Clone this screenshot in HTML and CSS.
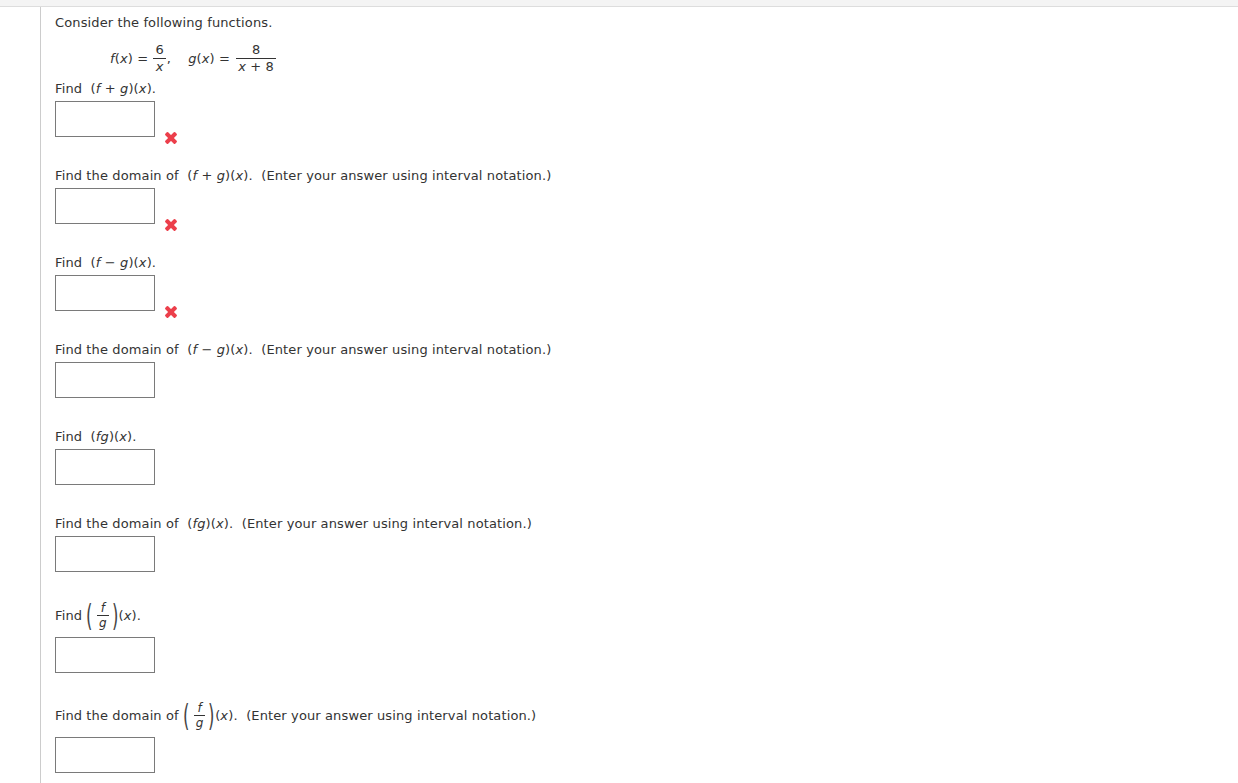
FILE: index.html
```html
<!DOCTYPE html>
<html>
<head>
<meta charset="utf-8">
<link rel="stylesheet" href="styles.css">
</head>
<body>
<div class="topbar"></div>
<div class="main">
  <p class="line intro">Consider the following functions.</p>
  <div class="formula">
    <span class="v">f</span>(<span class="v">x</span>) =&nbsp;<span class="frac small"><span class="num">6</span><span class="den"><span class="v">x</span></span></span>,&nbsp;&nbsp;&nbsp; <span class="v">g</span>(<span class="v">x</span>) =&nbsp;<span class="frac wide"><span class="num">8</span><span class="den"><span class="v">x</span> + 8</span></span>
  </div>

  <section class="q">
    <p class="line">Find&nbsp; (<span class="v">f</span> + <span class="v">g</span>)(<span class="v">x</span>).</p>
    <div class="answer"><div class="box"></div><span class="wrong"></span></div>
  </section>

  <section class="q">
    <p class="line">Find the domain of&nbsp; (<span class="v">f</span> + <span class="v">g</span>)(<span class="v">x</span>).&nbsp; (Enter your answer using interval notation.)</p>
    <div class="answer"><div class="box"></div><span class="wrong"></span></div>
  </section>

  <section class="q">
    <p class="line">Find&nbsp; (<span class="v">f</span> − <span class="v">g</span>)(<span class="v">x</span>).</p>
    <div class="answer"><div class="box"></div><span class="wrong"></span></div>
  </section>

  <section class="q">
    <p class="line">Find the domain of&nbsp; (<span class="v">f</span> − <span class="v">g</span>)(<span class="v">x</span>).&nbsp; (Enter your answer using interval notation.)</p>
    <div class="answer"><div class="box"></div></div>
  </section>

  <section class="q">
    <p class="line">Find&nbsp; (<span class="v">fg</span>)(<span class="v">x</span>).</p>
    <div class="answer"><div class="box"></div></div>
  </section>

  <section class="q">
    <p class="line">Find the domain of&nbsp; (<span class="v">fg</span>)(<span class="v">x</span>).&nbsp; (Enter your answer using interval notation.)</p>
    <div class="answer"><div class="box"></div></div>
  </section>

  <section class="q tall first-tall">
    <p class="line big">Find&nbsp;<span class="paren">(</span><span class="frac tiny"><span class="num"><span class="v">f</span></span><span class="den"><span class="v">g</span></span></span><span class="paren">)</span>(<span class="v">x</span>).</p>
    <div class="answer"><div class="box"></div></div>
  </section>

  <section class="q tall">
    <p class="line big">Find the domain of&nbsp;<span class="paren">(</span><span class="frac tiny"><span class="num"><span class="v">f</span></span><span class="den"><span class="v">g</span></span></span><span class="paren">)</span>(<span class="v">x</span>).&nbsp; (Enter your answer using interval notation.)</p>
    <div class="answer"><div class="box"></div></div>
  </section>
</div>
</body>
</html>
```

FILE: styles.css
```css
html, body {
  margin: 0;
  padding: 0;
  background: #ffffff;
}

body {
  font-family: "DejaVu Sans", Verdana, sans-serif;
  font-size: 13px;
  letter-spacing: 0.12px;
  color: #333333;
  width: 1238px;
  height: 783px;
  overflow: hidden;
}

.topbar {
  height: 6px;
  background: #f4f4f4;
  border-bottom: 1px solid #dddddd;
}

.main {
  margin-left: 40px;
  border-left: 1px solid #cccccc;
  padding-left: 14px;
  padding-top: 7px;
  height: 800px;
}

.line {
  margin: 0;
  height: 18px;
  line-height: 18px;
  white-space: nowrap;
}

.v {
  font-style: italic;
}

.formula {
  margin: 10px 0 0 55px;
  height: 32px;
  display: flex;
  align-items: center;
  white-space: pre;
}

.frac {
  display: inline-flex;
  flex-direction: column;
  align-items: center;
  vertical-align: middle;
  margin: 0 1px;
}

.frac .num {
  line-height: 14px;
  padding: 0 2px 1px;
}

.frac .den {
  line-height: 14px;
  border-top: 1px solid #333333;
  padding: 1px 2px 0;
  align-self: stretch;
  text-align: center;
}

.frac.wide {
  margin-left: 2px;
}

.frac.wide .den {
  padding: 1px 2px 0;
}

.frac.tiny {
  font-size: 12px;
  margin: 0 3px 0 4px;
}

.frac.tiny .num,
.frac.tiny .den {
  line-height: 13px;
  padding: 0 2px;
}

.frac.tiny .den {
  padding-top: 1px;
}

.q {
  margin-top: 6px;
}

.q + .q {
  margin-top: 30px;
}

.q.tall {
  margin-top: 25px;
}

.q.first-tall {
  margin-top: 26px;
}

.line.big {
  height: 36px;
  display: flex;
  align-items: center;
}

.paren {
  display: inline-block;
  font-size: 22px;
  line-height: 22px;
  transform: scale(0.75, 1.4);
  color: #444444;
  margin: 0 -1px;
}

.answer {
  margin-top: 3px;
  display: flex;
  align-items: flex-end;
  height: 36px;
}

.box {
  width: 98px;
  height: 34px;
  border: 1px solid #7a7a7a;
  background: #ffffff;
}

.wrong {
  position: relative;
  width: 12px;
  height: 12px;
  margin-left: 10px;
  margin-bottom: -7px;
}

.wrong::before,
.wrong::after {
  content: "";
  position: absolute;
  left: -1px;
  top: 4px;
  width: 14px;
  height: 4px;
  border-radius: 1px;
  background: #ec3f4b;
}

.wrong::before {
  transform: rotate(45deg);
}

.wrong::after {
  transform: rotate(-45deg);
}
```
